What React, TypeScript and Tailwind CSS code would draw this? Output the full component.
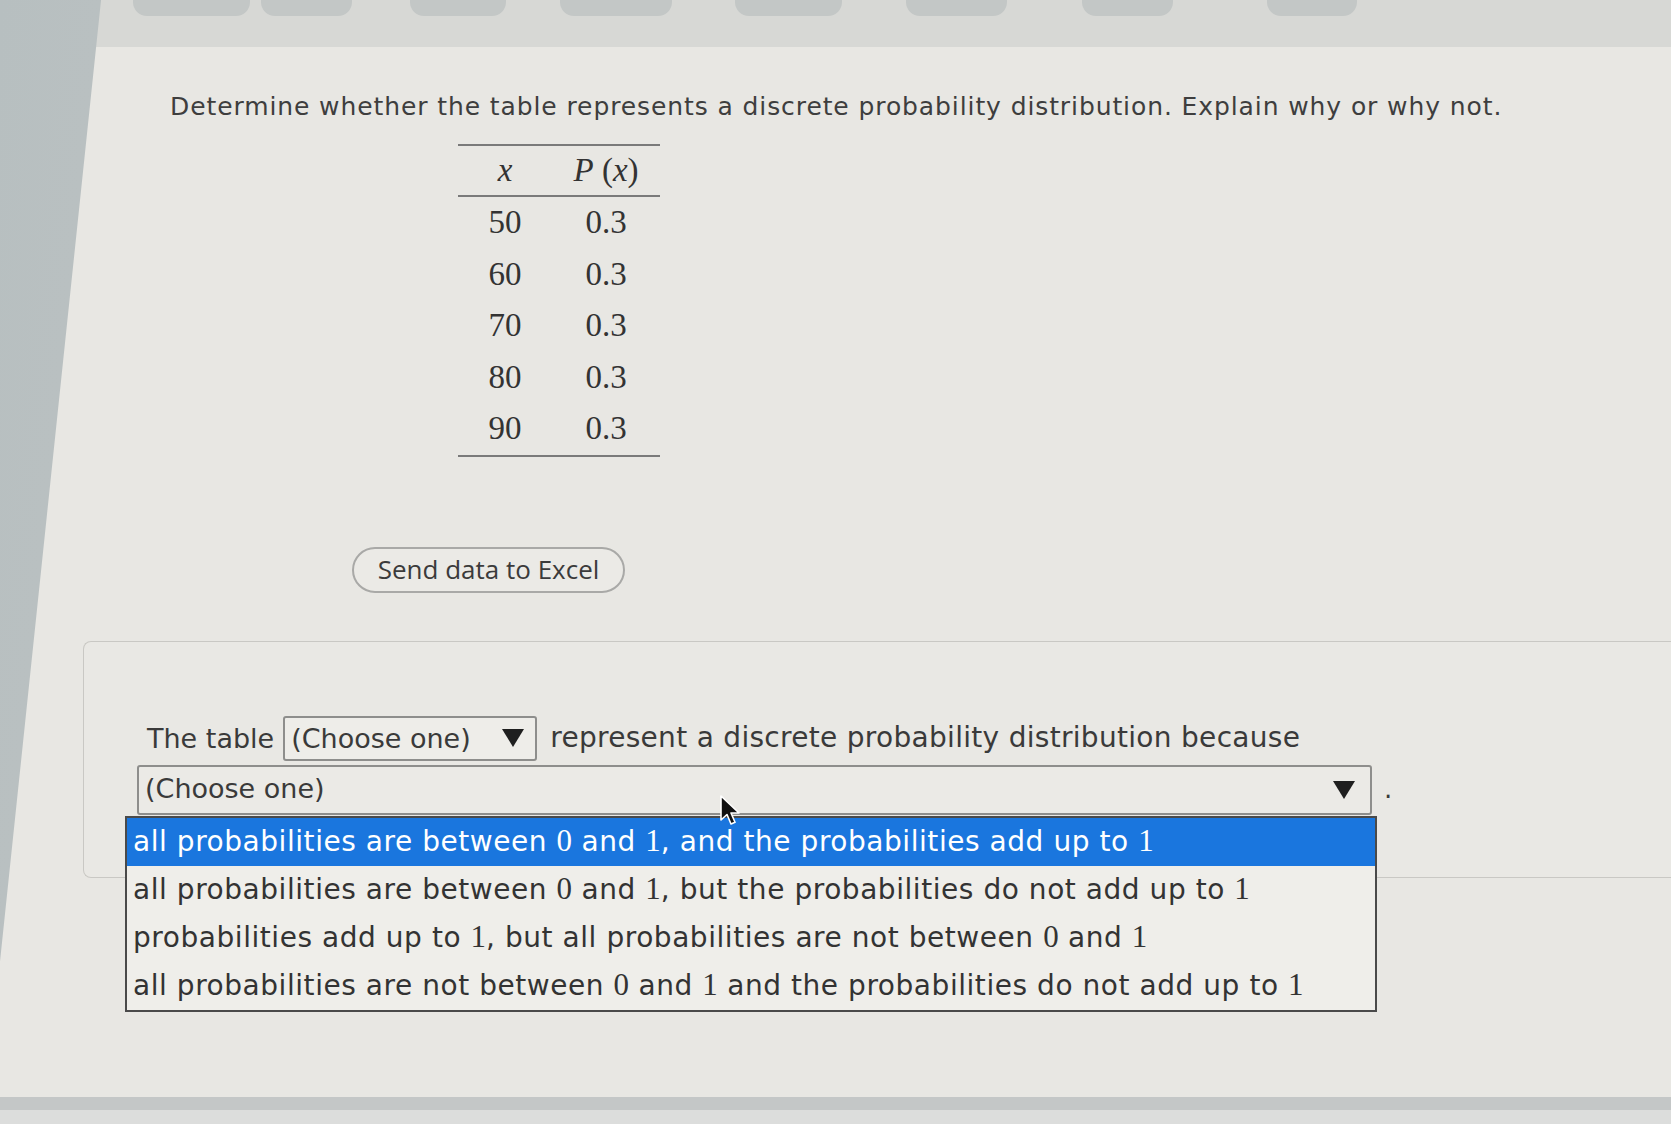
import React from "react";

const tabs: [number, number][] = [
  [133, 117],
  [261, 91],
  [410, 96],
  [560, 112],
  [735, 107],
  [906, 101],
  [1082, 91],
  [1267, 90],
];

function Num({ children }: { children: React.ReactNode }) {
  return (
    <span className="text-[31px] tracking-normal" style={{ fontFamily: '"Liberation Serif", "DejaVu Serif", serif' }}>
      {children}
    </span>
  );
}

function Triangle() {
  return (
    <svg width="24" height="20" viewBox="0 0 24 20" className="shrink-0">
      <polygon points="1,1 23,1 12,19" fill="#1f1f1f" />
    </svg>
  );
}

export default function App() {
  const rows = [
    ["50", "0.3"],
    ["60", "0.3"],
    ["70", "0.3"],
    ["80", "0.3"],
    ["90", "0.3"],
  ];
  const options: React.ReactNode[] = [
    <>all probabilities are between <Num>0</Num> and <Num>1</Num>, and the probabilities add up to <Num>1</Num></>,
    <>all probabilities are between <Num>0</Num> and <Num>1</Num>, but the probabilities do not add up to <Num>1</Num></>,
    <>probabilities add up to <Num>1</Num>, but all probabilities are not between <Num>0</Num> and <Num>1</Num></>,
    <>all probabilities are not between <Num>0</Num> and <Num>1</Num> and the probabilities do not add up to <Num>1</Num></>,
  ];
  return (
    <div
      className="relative w-[1671px] h-[1124px] overflow-hidden flex flex-col bg-[linear-gradient(96deg,#b7bfc0_0px,#b9c0c1_100px,#e8e7e3_101px)] text-[#3a3a3a]"
      style={{ fontFamily: '"DejaVu Sans", Verdana, sans-serif' }}
    >
      {/* top band with tabs */}
      <div className="h-[47px] shrink-0 bg-[linear-gradient(96deg,#b7bfc0_0px,#b9c0c1_100px,#d7d8d5_101px)] relative">
        <div className="flex h-[16px]">
          {tabs.map(([x, w], i) => (
            <div
              key={i}
              className="absolute top-0 h-[16px] rounded-b-[14px] bg-[#c3c7c6]"
              style={{ left: x, width: w }}
            />
          ))}
        </div>
      </div>

      {/* title */}
      <div className="pl-[170px] pt-[45px] text-[25px] leading-[30px] tracking-[0.9px] text-[#3e3e3e] whitespace-nowrap">
        Determine whether the table represents a discrete probability distribution. Explain why or why not.
      </div>

      {/* table */}
      <div
        className="ml-[458px] mt-[22px] w-[202px] text-[33px] text-[#333]"
        style={{ fontFamily: '"Liberation Serif", "DejaVu Serif", serif' }}
      >
        <div className="border-t-2 border-b-2 border-[#7a7a7a] h-[53px] flex items-center">
          <div className="w-[94px] text-center italic">x</div>
          <div className="w-[108px] text-center">
            <span className="italic">P</span> (<span className="italic">x</span>)
          </div>
        </div>
        <div className="border-b-2 border-[#7a7a7a]">
          {rows.map(([a, b]) => (
            <div key={a} className="h-[51.5px] flex items-center">
              <div className="w-[94px] text-center">{a}</div>
              <div className="w-[108px] text-center">{b}</div>
            </div>
          ))}
        </div>
      </div>

      {/* button */}
      <div className="ml-[352px] mt-[90px]">
        <div
          className="w-[273px] h-[46px] rounded-full border-2 border-[#a9a9a7] bg-[#ebeae6] flex items-center justify-center text-[26px] text-[#3b3b3b]"
          style={{ fontFamily: '"Open Sans", "Liberation Sans", sans-serif' }}
        >
          Send data to Excel
        </div>
      </div>

      {/* answer panel */}
      <div className="ml-[83px] mt-[48px] h-[237px] shrink-0 rounded-tl-[8px] rounded-bl-[8px] border border-r-0 border-[#c9c8c4] bg-[#e9e8e4] pt-[74px] pl-[53px] relative">
        <div className="flex items-center text-[28px] leading-none whitespace-nowrap">
          <span className="ml-[10px] text-[27px]">The table</span>
          <div className="ml-[9px] w-[254px] h-[45px] border-2 border-[#8e8e8c] rounded-[3px] bg-[#eeede9] flex items-center justify-between pl-[6px] pr-[10px] text-[27px]">
            <span>(Choose one)</span>
            <Triangle />
          </div>
          <span className="ml-[13px] tracking-[0.3px]">represent a discrete probability distribution because</span>
        </div>
        <div className="flex items-center mt-[4px]">
          <div className="relative w-[1235px] h-[50px] border-2 border-[#8e8e8c] rounded-[3px] bg-[#ebeae6] flex items-center justify-between pl-[6px] pr-[14px] text-[27px] whitespace-nowrap">
            <span>(Choose one)</span>
            <Triangle />
            {/* open listbox */}
            <div className="absolute left-[-14px] top-[49px] w-[1252px] border-2 border-[#4a4a4a] bg-[#efeeea] z-10 text-[28px] tracking-[0.55px]">
              {options.map((o, i) => (
                <div
                  key={i}
                  className={
                    "h-[48px] flex items-center pl-[6px] whitespace-nowrap " +
                    (i === 0 ? "bg-[#1a76de] text-white" : "text-[#333]")
                  }
                >
                  <span>{o}</span>
                </div>
              ))}
            </div>
            {/* mouse cursor */}
            <svg
              className="absolute left-[580px] top-[28px] z-20"
              width="22"
              height="32"
              viewBox="0 0 22 32"
            >
              <path
                d="M2 1 L2 25 L8 19.5 L12 29 L16 27.3 L12 18 L20 18 Z"
                fill="#111"
                stroke="#fff"
                strokeWidth="1.6"
                strokeLinejoin="round"
              />
            </svg>
          </div>
          <span className="ml-[12px] text-[26px]">.</span>
        </div>
      </div>

      <div className="flex-1" />
      <div className="h-[13px] shrink-0 bg-[#c4c7c7]" />
      <div className="h-[14px] shrink-0 bg-[#dcdddc]" />
    </div>
  );
}
